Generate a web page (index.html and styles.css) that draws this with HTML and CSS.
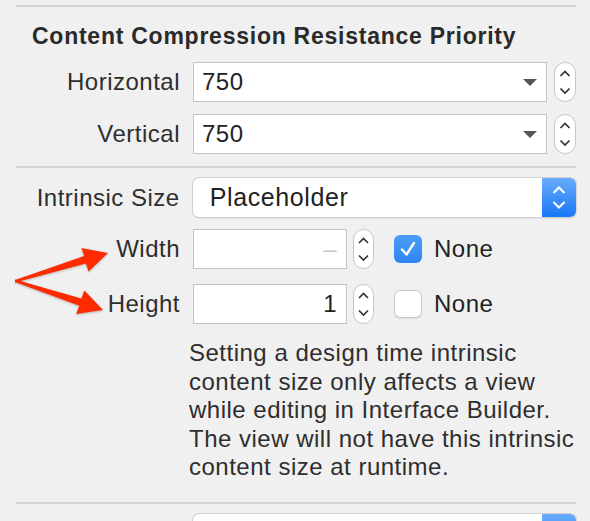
FILE: index.html
```html
<!DOCTYPE html>
<html lang="en">
<head>
  <meta charset="UTF-8" />
  <title>Size Inspector</title>
  <link rel="stylesheet" href="styles.css">
</head>
<body>
  <div class="inspector">
    <hr class="rule rule-top">

    <!-- compression resistance -->
    <section class="group">
      <h2 class="group-title">Content Compression Resistance Priority</h2>
      <div class="row row-first">
        <label class="row-label">Horizontal</label>
        <div class="combo">
          <span class="combo-value">750</span>
          <span class="combo-arrow"></span>
        </div>
        <svg class="stepper" viewBox="0 0 22 40" width="22" height="40">
          <rect x="0.5" y="0.5" width="21" height="39" rx="10.5" fill="#fff" stroke="#c6c6c6"/>
          <polyline points="6.5,14 11,9.5 15.5,14" fill="none" stroke="#333" stroke-width="1.7"/>
          <polyline points="6.5,26.5 11,31 15.5,26.5" fill="none" stroke="#333" stroke-width="1.7"/>
        </svg>
      </div>
      <div class="row">
        <label class="row-label">Vertical</label>
        <div class="combo">
          <span class="combo-value">750</span>
          <span class="combo-arrow"></span>
        </div>
        <svg class="stepper" viewBox="0 0 22 40" width="22" height="40">
          <rect x="0.5" y="0.5" width="21" height="39" rx="10.5" fill="#fff" stroke="#c6c6c6"/>
          <polyline points="6.5,14 11,9.5 15.5,14" fill="none" stroke="#333" stroke-width="1.7"/>
          <polyline points="6.5,26.5 11,31 15.5,26.5" fill="none" stroke="#333" stroke-width="1.7"/>
        </svg>
      </div>
    </section>

    <hr class="rule rule-mid">

    <!-- intrinsic size -->
    <section class="group">
      <div class="row row-popup">
        <label class="row-label">Intrinsic Size</label>
        <div class="popup">
          <span class="popup-value">Placeholder</span>
          <span class="popup-arrows">
            <svg viewBox="0 0 34 39" width="34" height="39">
              <polyline points="11.5,15 17,9.5 22.5,15" fill="none" stroke="#fff" stroke-width="2"/>
              <polyline points="11.5,24 17,29.5 22.5,24" fill="none" stroke="#fff" stroke-width="2"/>
            </svg>
          </span>
        </div>
      </div>
      <div class="row row-size">
        <label class="row-label">Width</label>
        <div class="field"><span class="field-empty">–</span></div>
        <svg class="stepper stepper-small" viewBox="0 0 21 40" width="21" height="40">
          <rect x="0.5" y="0.5" width="20" height="39" rx="10" fill="#fff" stroke="#c6c6c6"/>
          <polyline points="6,14 10.5,9.5 15,14" fill="none" stroke="#333" stroke-width="1.7"/>
          <polyline points="6,26.5 10.5,31 15,26.5" fill="none" stroke="#333" stroke-width="1.7"/>
        </svg>
        <span class="check check-on">
          <svg viewBox="0 0 28 28" width="28" height="28">
            <polyline points="8,14.5 12.5,19.5 20,8" fill="none" stroke="#fff" stroke-width="2.4" stroke-linecap="round" stroke-linejoin="round"/>
          </svg>
        </span>
        <span class="check-label">None</span>
      </div>
      <div class="row row-size">
        <label class="row-label">Height</label>
        <div class="field"><span class="field-value">1</span></div>
        <svg class="stepper stepper-small" viewBox="0 0 21 40" width="21" height="40">
          <rect x="0.5" y="0.5" width="20" height="39" rx="10" fill="#fff" stroke="#c6c6c6"/>
          <polyline points="6,14 10.5,9.5 15,14" fill="none" stroke="#333" stroke-width="1.7"/>
          <polyline points="6,26.5 10.5,31 15,26.5" fill="none" stroke="#333" stroke-width="1.7"/>
        </svg>
        <span class="check"></span>
        <span class="check-label">None</span>
      </div>
      <p class="note">
        Setting a design time intrinsic<br>
        content size only affects a view<br>
        while editing in Interface Builder.<br>
        The view will not have this intrinsic<br>
        content size at runtime.
      </p>
    </section>

    <hr class="rule rule-bottom">

    <div class="row row-popup">
      <label class="row-label"></label>
      <div class="popup">
        <span class="popup-value"></span>
        <span class="popup-arrows"></span>
      </div>
    </div>

    <!-- annotation arrows -->
    <svg class="arrows" viewBox="0 0 590 521" width="590" height="521">
      <g fill="#ff2b00">
        <polygon points="15,280 84.2,256 81.4,248 108,253 88.6,271.5 85.8,263.4 15,282.5"/>
        <polygon points="15,279.5 81.3,298.6 84.4,290.5 103,310 76.2,314 79.3,305.8 15,282"/>
      </g>
    </svg>
  </div>
</body>
</html>
```

FILE: styles.css
```css
* { margin: 0; padding: 0; box-sizing: border-box; }

body {
  width: 590px;
  height: 521px;
  overflow: hidden;
  background: #f0f0f0;
  font-family: "Liberation Sans", Arial, sans-serif;
  color: #2c2c2c;
}

.inspector {
  position: relative;
  height: 521px;
  overflow: hidden;
  padding: 5px 14px 0 16px;
}

.rule {
  border: 0;
  height: 2px;
  background: #d3d3d3;
}

.rule-mid { margin-top: 12px; }
.rule-bottom { margin-top: 20px; }

.group-title {
  margin-top: 17px;
  margin-left: 16px;
  font-size: 23px;
  line-height: 24px;
  font-weight: bold;
  letter-spacing: 0.75px;
  color: #2a2a2a;
}

.row {
  display: flex;
  align-items: center;
  height: 40px;
  margin-top: 12px;
  font-size: 24px;
  letter-spacing: 0.5px;
}

.row-first { margin-top: 14px; }

.row-label {
  width: 164px;
  margin-right: 13px;
  text-align: right;
  color: #2e2e2e;
}

.combo {
  display: flex;
  align-items: center;
  justify-content: space-between;
  width: 354px;
  height: 40px;
  background: #fff;
  border: 1px solid #c4c4c4;
  padding: 0 8px 0 8px;
}

.combo-value { color: #222; }

.combo-arrow {
  width: 0;
  height: 0;
  border-left: 7px solid transparent;
  border-right: 7px solid transparent;
  border-top: 7px solid #555;
  margin-right: 1px;
}

.stepper { margin-left: 7px; flex-shrink: 0; }

/* intrinsic size */
.row-popup {
  margin-top: 10px;
  height: 39px;
}

.popup {
  display: flex;
  width: 384px;
  height: 39px;
  background: #fff;
  border-radius: 6px;
  box-shadow: 0 0 0 1px #d2d2d2, 0 1px 2px rgba(0, 0, 0, 0.18);
  overflow: hidden;
}

.popup-value {
  flex: 1;
  padding-left: 17px;
  font-size: 25px;
  letter-spacing: 0.6px;
  line-height: 39px;
  color: #222;
}

.popup-arrows {
  width: 34px;
  height: 39px;
  background: linear-gradient(#69adfb, #1877f8);
}

.popup-arrows svg { display: block; }

.row-size {
  height: 40px;
  margin-top: 12px;
}

.row-size + .row-size { margin-top: 15px; }

.field {
  width: 154px;
  height: 40px;
  background: #fff;
  border: 1px solid #c4c4c4;
  text-align: right;
  padding-right: 9px;
  line-height: 38px;
}

.field-empty { color: #c8c8c8; }
.field-value { color: #222; }

.stepper-small { margin-left: 6px; }

.check {
  width: 28px;
  height: 28px;
  margin-left: 20px;
  border-radius: 6px;
  background: #fff;
  box-shadow: inset 0 0 0 1px #c8c8c8, 0 1px 1px rgba(0, 0, 0, 0.08);
}

.check svg { display: block; }

.check-on {
  background: linear-gradient(#4b9ef8, #2f86f2);
  box-shadow: none;
}

.check-label {
  margin-left: 12px;
  color: #222;
}

.note {
  margin: 15px 0 0 173px;
  white-space: nowrap;
  font-size: 24px;
  letter-spacing: 0.5px;
  line-height: 28.5px;
  color: #2e2e2e;
}

.arrows {
  position: absolute;
  top: 0;
  left: 0;
  pointer-events: none;
  filter: drop-shadow(0 1px 1px rgba(0, 0, 0, 0.25));
}
```
